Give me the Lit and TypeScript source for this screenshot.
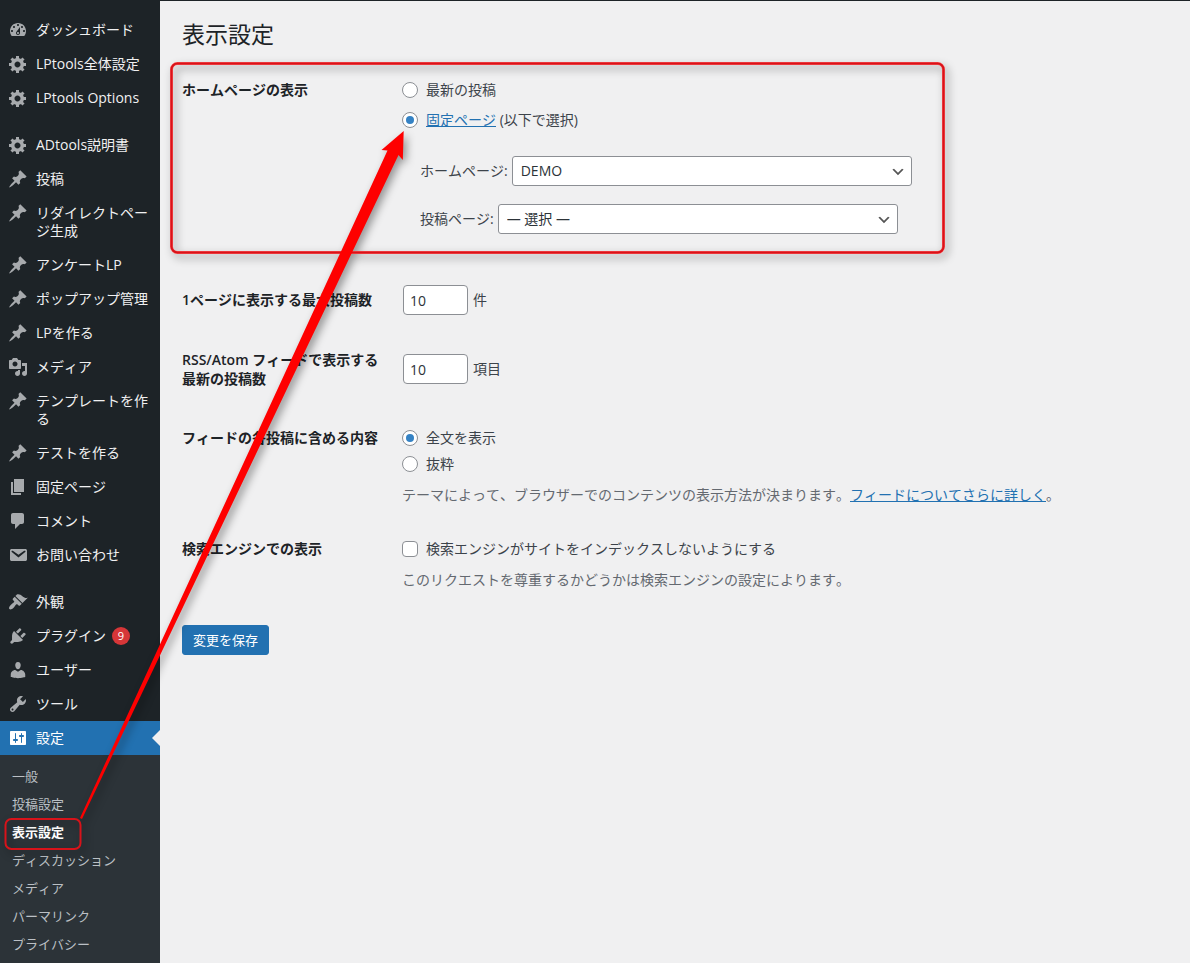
import { LitElement, html, css, svg, nothing } from "lit";
import { customElement, property } from "lit/decorators.js";
import { classMap } from "lit/directives/class-map.js";

const ICONS: Record<string, string> = {
  dashboard:
    "M3.76 16h12.48c1.1-1.37 1.76-3.11 1.76-5 0-4.42-3.58-8-8-8s-8 3.58-8 8c0 1.89.66 3.63 1.76 5zM10 4c.55 0 1 .45 1 1s-.45 1-1 1-1-.45-1-1 .45-1 1-1zM6 6c.55 0 1 .45 1 1s-.45 1-1 1-1-.45-1-1 .45-1 1-1zm8 0c.55 0 1 .45 1 1s-.45 1-1 1-1-.45-1-1 .45-1 1-1zm-5.37 5.55L12 7v6c0 1.1-.9 2-2 2s-2-.9-2-2c0-.57.24-1.08.63-1.45zM4 10c.55 0 1 .45 1 1s-.45 1-1 1-1-.45-1-1 .45-1 1-1zm12 0c.55 0 1 .45 1 1s-.45 1-1 1-1-.45-1-1 .45-1 1-1zm-5 3c0-.55-.45-1-1-1s-1 .45-1 1 .45 1 1 1 1-.45 1-1z",
  gear:
    "M18 12h-2.18c-.17.7-.44 1.35-.81 1.93l1.54 1.54-2.1 2.1-1.54-1.54c-.58.36-1.23.63-1.91.79V19H8v-2.18c-.68-.16-1.33-.43-1.91-.79l-1.54 1.54-2.12-2.12 1.54-1.54c-.36-.58-.63-1.23-.79-1.91H1V9.03h2.17c.16-.7.44-1.35.8-1.94L2.43 5.55l2.1-2.1 1.54 1.54c.58-.37 1.24-.64 1.93-.81V2h3v2.18c.68.16 1.33.43 1.91.79l1.54-1.54 2.12 2.12-1.54 1.54c.36.59.64 1.24.8 1.94H18V12zm-8.5 1.5c1.66 0 3-1.34 3-3s-1.34-3-3-3-3 1.34-3 3 1.34 3 3 3z",
  pin:
    "M10.44 3.02l1.82-1.82 6.36 6.35-1.83 1.82c-1.05-.68-2.48-.57-3.41.36l-.75.75c-.92.93-1.04 2.35-.35 3.41l-1.83 1.82-2.41-2.41-2.8 2.79c-.42.42-3.38 2.71-3.8 2.29s1.86-3.39 2.28-3.81l2.79-2.79L4.1 9.36l1.83-1.82c1.05.69 2.48.57 3.4-.36l.75-.75c.93-.92 1.05-2.35.36-3.41z",
  media:
    "M13 11V4c0-.55-.45-1-1-1h-1.67L9 1H5L3.67 3H2c-.55 0-1 .45-1 1v7c0 .55.45 1 1 1h10c.55 0 1-.45 1-1zM7 4.5c1.38 0 2.5 1.12 2.5 2.5S8.38 9.5 7 9.5 4.5 8.38 4.5 7 5.62 4.5 7 4.5zM14 6h5v10.5c0 1.38-1.12 2.5-2.5 2.5S14 17.88 14 16.5s1.12-2.5 2.5-2.5c.17 0 .34.02.5.05V9h-3V6zm-4 8.05V13h2v3.5c0 1.38-1.12 2.5-2.5 2.5S7 17.88 7 16.5 8.12 14 9.5 14c.17 0 .34.02.5.05z",
  page: "M6 15V2h10v13H6zm-1 1h8v2H3V5h2v11z",
  comment:
    "M5 2h9c1.1 0 2 .9 2 2v7c0 1.1-.9 2-2 2h-2l-5 5v-5H5c-1.1 0-2-.9-2-2V4c0-1.1.9-2 2-2z",
  mail:
    "M3.87 4h13.25C18.37 4 19 4.59 19 5.79v8.42c0 1.19-.63 1.79-1.88 1.79H3.87c-1.25 0-1.88-.6-1.88-1.79V5.79c0-1.2.63-1.79 1.88-1.79zm6.62 8.6l6.74-5.53c.24-.2.43-.66.13-1.07-.29-.41-.82-.42-1.17-.17l-5.7 3.86L4.8 5.83c-.35-.25-.88-.24-1.17.17-.3.41-.11.87.13 1.07z",
  brush:
    "M14.48 11.06L7.41 3.99l1.5-1.5c.5-.56 2.3-.47 3.51.32 1.21.8 1.43 1.28 2.91 2.1 1.18.64 2.45 1.26 4.45.85zm-.71.71L6.7 4.7 4.93 6.47c-.39.39-.39 1.02 0 1.41l1.06 1.06c.39.39.39 1.03 0 1.42-.6.6-1.43 1.11-2.21 1.69-.35.26-.7.53-1.01.84C1.43 14.23.4 16.08 1.4 17.07c.99 1 2.84-.03 4.18-1.36.31-.31.58-.66.85-1.02.57-.78 1.08-1.61 1.69-2.21.39-.39 1.02-.39 1.41 0l1.06 1.06c.39.39 1.02.39 1.41 0z",
  plug:
    "M13.11 4.36L9.87 7.6 8 5.73l3.24-3.24c.35-.34 1.05-.2 1.56.32.52.51.66 1.21.31 1.55zm-8 1.77l.91-1.12 9.01 9.01-1.19.84c-.71.71-2.63 1.16-3.82 1.16H6.14L4.9 17.26c-.59.59-1.54.59-2.12 0-.59-.58-.59-1.53 0-2.12l1.24-1.24v-3.88c0-1.13.4-3.19 1.09-3.89zm7.26 3.97l3.24-3.24c.34-.35 1.04-.21 1.55.31.52.51.66 1.21.31 1.55l-3.24 3.25z",
  user:
    "M10 9.25c-2.27 0-2.73-3.44-2.73-3.44C7 4.02 7.82 2 9.97 2c2.16 0 2.98 2.02 2.71 3.81 0 0-.41 3.44-2.68 3.44zm0 2.57L12.72 10c2.39 0 4.52 2.33 4.52 4.53v2.49s-3.65 1.13-7.24 1.13c-3.65 0-7.24-1.13-7.24-1.13v-2.49c0-2.25 1.94-4.48 4.47-4.48z",
  wrench:
    "M16.68 9.77c-1.34 1.34-3.3 1.67-4.95.99l-5.41 6.52c-.99.99-2.59.99-3.58 0s-.99-2.59 0-3.57l6.52-5.42c-.68-1.65-.35-3.61.99-4.95 1.28-1.28 3.12-1.62 4.72-1.06l-2.89 2.89 2.82 2.82 2.86-2.87c.53 1.58.18 3.39-1.08 4.65zM3.81 16.21c.4.39 1.04.39 1.43 0 .4-.4.4-1.04 0-1.43-.39-.4-1.03-.4-1.43 0-.39.39-.39 1.03 0 1.43z",
  sliders:
    "M18 16V4c0-.55-.45-1-1-1H3c-.55 0-1 .45-1 1v12c0 .55.45 1 1 1h14c.55 0 1-.45 1-1zM8 11h1c.55 0 1 .45 1 1s-.45 1-1 1H8v1.5c0 .28-.22.5-.5.5s-.5-.22-.5-.5V13H6c-.55 0-1-.45-1-1s.45-1 1-1h1V5.5c0-.28.22-.5.5-.5s.5.22.5.5V11zm5-2h-1c-.55 0-1-.45-1-1s.45-1 1-1h1V5.5c0-.28.22-.5.5-.5s.5.22.5.5V7h1c.55 0 1 .45 1 1s-.45 1-1 1h-1v5.5c0 .28-.22.5-.5.5s-.5-.22-.5-.5V9z",
};

interface MenuEntry {
  icon: string;
  label: string;
  badge?: number;
  current?: boolean;
}

const MENU: MenuEntry[][] = [
  [
    { icon: "dashboard", label: "ダッシュボード" },
    { icon: "gear", label: "LPtools全体設定" },
    { icon: "gear", label: "LPtools Options" },
  ],
  [
    { icon: "gear", label: "ADtools説明書" },
    { icon: "pin", label: "投稿" },
    { icon: "pin", label: "リダイレクトページ生成" },
    { icon: "pin", label: "アンケートLP" },
    { icon: "pin", label: "ポップアップ管理" },
    { icon: "pin", label: "LPを作る" },
    { icon: "media", label: "メディア" },
    { icon: "pin", label: "テンプレートを作る" },
    { icon: "pin", label: "テストを作る" },
    { icon: "page", label: "固定ページ" },
    { icon: "comment", label: "コメント" },
    { icon: "mail", label: "お問い合わせ" },
  ],
  [
    { icon: "brush", label: "外観" },
    { icon: "plug", label: "プラグイン", badge: 9 },
    { icon: "user", label: "ユーザー" },
    { icon: "wrench", label: "ツール" },
    { icon: "sliders", label: "設定", current: true },
  ],
];

const SUBMENU = [
  "一般",
  "投稿設定",
  "表示設定",
  "ディスカッション",
  "メディア",
  "パーマリンク",
  "プライバシー",
];

@customElement("admin-menu")
export class AdminMenu extends LitElement {
  @property() active = "";

  static styles = css`
    :host {
      display: block;
      background: #1d2327;
      color: #f0f0f1;
      font-size: 14px;
      line-height: 18px;
      padding-top: 13px;
    }
    ul {
      list-style: none;
      margin: 0;
      padding: 0;
    }
    .group + .group {
      margin-top: 13px;
    }
    a {
      color: inherit;
      text-decoration: none;
    }
    .item {
      display: flex;
      position: relative;
      padding-right: 8px;
    }
    .icon {
      flex: none;
      width: 20px;
      height: 20px;
      padding: 7px 8px;
      fill: #a7aaad;
    }
    .label {
      padding: 8px 0;
    }
    .badge {
      display: inline-block;
      min-width: 18px;
      height: 18px;
      margin-left: 6px;
      border-radius: 9px;
      background: #d63638;
      color: #fff;
      font-size: 11px;
      text-align: center;
      vertical-align: top;
    }
    .current {
      background: #2271b1;
      color: #fff;
    }
    .current .icon {
      fill: #fff;
    }
    .current::after {
      content: "";
      position: absolute;
      right: 0;
      top: 50%;
      margin-top: -8px;
      border: 8px solid transparent;
      border-right-color: #f0f0f1;
      border-left-width: 0;
    }
    .submenu {
      background: #2c3338;
      padding: 7px 0 8px;
      font-size: 13px;
    }
    .submenu a {
      display: block;
      padding: 5px 12px;
      color: #bbc0c5;
    }
    .submenu .active {
      color: #fff;
      font-weight: 600;
    }
  `;

  private renderItem(item: MenuEntry) {
    return html`<li>
      <a class=${classMap({ item: true, current: !!item.current })} href="#">
        <svg class="icon" viewBox="0 0 20 20" aria-hidden="true">
          <path fill-rule="evenodd" d=${ICONS[item.icon]}></path>
        </svg>
        <span class="label"
          >${item.label}${item.badge
            ? html`<span class="badge">${item.badge}</span>`
            : nothing}</span
        >
      </a>
      ${item.current
        ? html`<ul class="submenu">
            ${SUBMENU.map(
              (name) => html`<li>
                <a class=${classMap({ active: name === this.active })} href="#">${name}</a>
              </li>`
            )}
          </ul>`
        : nothing}
    </li>`;
  }

  render() {
    return html`<nav>
      ${MENU.map((group) => html`<ul class="group">${group.map((item) => this.renderItem(item))}</ul>`)}
    </nav>`;
  }
}

@customElement("reading-settings")
export class ReadingSettings extends LitElement {
  static styles = css`
    :host {
      display: block;
      padding: 0 20px 40px 22px;
      border-top: 1px solid #1d2327;
      font-size: 14px;
      line-height: 18px;
      color: #3c434a;
    }
    h1 {
      margin: 0;
      padding: 18px 0 11px;
      font-size: 23px;
      line-height: 30px;
      font-weight: 400;
      color: #1d2327;
    }
    .row {
      display: grid;
      grid-template-columns: 200px minmax(0, 1fr);
      column-gap: 20px;
      min-height: 60px;
    }
    .heading {
      padding: 20px 0;
      line-height: 19px;
      font-weight: 600;
      color: #1d2327;
    }
    .options {
      display: flex;
      flex-direction: column;
      align-items: flex-start;
      gap: 8px;
      padding: 21px 0 15px;
    }
    .spaced {
      gap: 12px;
    }
    .front {
      padding-bottom: 36px;
    }
    .choice {
      display: flex;
      align-items: center;
      gap: 8px;
    }
    .pages {
      display: flex;
      flex-direction: column;
      gap: 18px;
      padding: 15px 0 0 18px;
    }
    .page {
      display: flex;
      align-items: center;
      gap: 4px;
    }
    .count {
      display: flex;
      align-items: center;
      gap: 5px;
      padding-left: 1px;
    }
    .note {
      margin: 5px 0 0;
      color: #646970;
    }
    a {
      color: #2271b1;
    }
    input,
    select {
      box-sizing: border-box;
      margin: 0;
      border: 1px solid #8c8f94;
      background-color: #fff;
      color: #2c3338;
      font: inherit;
      appearance: none;
    }
    .mark {
      display: grid;
      place-items: center;
      flex: none;
      width: 16px;
      height: 16px;
      border-radius: 4px;
    }
    .radio {
      border-radius: 50%;
    }
    .radio:checked::before {
      content: "";
      width: 8px;
      height: 8px;
      border-radius: 50%;
      background: #3582c4;
    }
    .number {
      width: 65px;
      height: 30px;
      padding: 0 6px;
      border-radius: 4px;
      appearance: textfield;
    }
    select {
      width: 400px;
      max-width: 100%;
      height: 30px;
      padding: 0 24px 0 8px;
      border-radius: 3px;
      background: #fff
        url("data:image/svg+xml,%3Csvg xmlns='http://www.w3.org/2000/svg' viewBox='0 0 20 20'%3E%3Cpath d='M5 6l5 5 5-5 2 1-7 7-7-7 2-1z' fill='%23555'/%3E%3C/svg%3E")
        no-repeat right 5px top 55% / 16px 16px;
    }
    .save {
      display: block;
      height: 30px;
      margin-top: 21px;
      padding: 0 10px;
      border: 1px solid #2271b1;
      border-radius: 3px;
      background: #2271b1;
      color: #fff;
      font: inherit;
      font-size: 13px;
    }
  `;

  render() {
    return html`<form>
      <h1>表示設定</h1>
      <div class="row" role="radiogroup" aria-labelledby="front-heading">
        <div class="heading" id="front-heading">ホームページの表示</div>
        <div class="options spaced front">
          <label class="choice"
            ><input class="mark radio" type="radio" name="front" />最新の投稿</label
          >
          <label class="choice"
            ><input class="mark radio" type="radio" name="front" checked /><span
              ><a href="#">固定ページ</a> (以下で選択)</span
            ></label
          >
          <div class="pages">
            <div class="page">
              <label for="home-page">ホームページ:</label>
              <select id="home-page">
                <option selected>DEMO</option>
              </select>
            </div>
            <div class="page">
              <label for="posts-page">投稿ページ:</label>
              <select id="posts-page">
                <option selected>— 選択 —</option>
              </select>
            </div>
          </div>
        </div>
      </div>
      <div class="row">
        <label class="heading" for="per-page">1ページに表示する最大投稿数</label>
        <div class="count"><input class="number" id="per-page" type="number" value="10" />件</div>
      </div>
      <div class="row">
        <label class="heading" for="per-feed">RSS/Atom フィードで表示する最新の投稿数</label>
        <div class="count"><input class="number" id="per-feed" type="number" value="10" />項目</div>
      </div>
      <div class="row" role="radiogroup" aria-labelledby="feed-heading">
        <div class="heading" id="feed-heading">フィードの各投稿に含める内容</div>
        <div class="options">
          <label class="choice"
            ><input class="mark radio" type="radio" name="feed" checked />全文を表示</label
          >
          <label class="choice"
            ><input class="mark radio" type="radio" name="feed" />抜粋</label
          >
          <p class="note">
            テーマによって、ブラウザーでのコンテンツの表示方法が決まります。<a href="#"
              >フィードについてさらに詳しく</a
            >。
          </p>
        </div>
      </div>
      <div class="row">
        <div class="heading">検索エンジンでの表示</div>
        <div class="options">
          <label class="choice"
            ><input class="mark" type="checkbox" />検索エンジンがサイトをインデックスしないようにする</label
          >
          <p class="note">このリクエストを尊重するかどうかは検索エンジンの設定によります。</p>
        </div>
      </div>
      <button class="save" type="button">変更を保存</button>
    </form>`;
  }
}

@customElement("app-root")
export class AppRoot extends LitElement {
  static styles = css`
    :host {
      display: grid;
      grid-template-columns: 160px minmax(0, 1fr);
      position: relative;
      min-height: 100vh;
      overflow: hidden;
      background: #f0f0f1;
      font-family: "Open Sans", "Noto Sans CJK JP", sans-serif;
      font-kerning: none;
    }
    .callout {
      position: absolute;
      inset: 0;
      width: 100%;
      height: 100%;
      pointer-events: none;
      filter: drop-shadow(3px 4px 4px rgba(0, 0, 0, 0.4));
    }
    .halo,
    .frame {
      fill: none;
      stroke: #ff5a5a;
      stroke-width: 3;
    }
    .frame {
      stroke: #d8131a;
      stroke-width: 2;
    }
    .arrow {
      fill: #fe0000;
    }
  `;

  render() {
    return html`
      <admin-menu active="表示設定"></admin-menu>
      <reading-settings></reading-settings>
      <svg class="callout" aria-hidden="true">
        ${svg`
          <rect class="halo" x="171.5" y="63.5" width="772" height="189" rx="6"></rect>
          <rect class="frame" x="171.5" y="63.5" width="772" height="189" rx="6"></rect>
          <rect class="frame" x="5.5" y="819" width="75" height="30" rx="6"></rect>
          <path class="arrow" d="M80 818L387.5 150.5L381.5 150L403.7 131L402.8 160L398.5 155L82 819Z"></path>
        `}
      </svg>
    `;
  }
}
